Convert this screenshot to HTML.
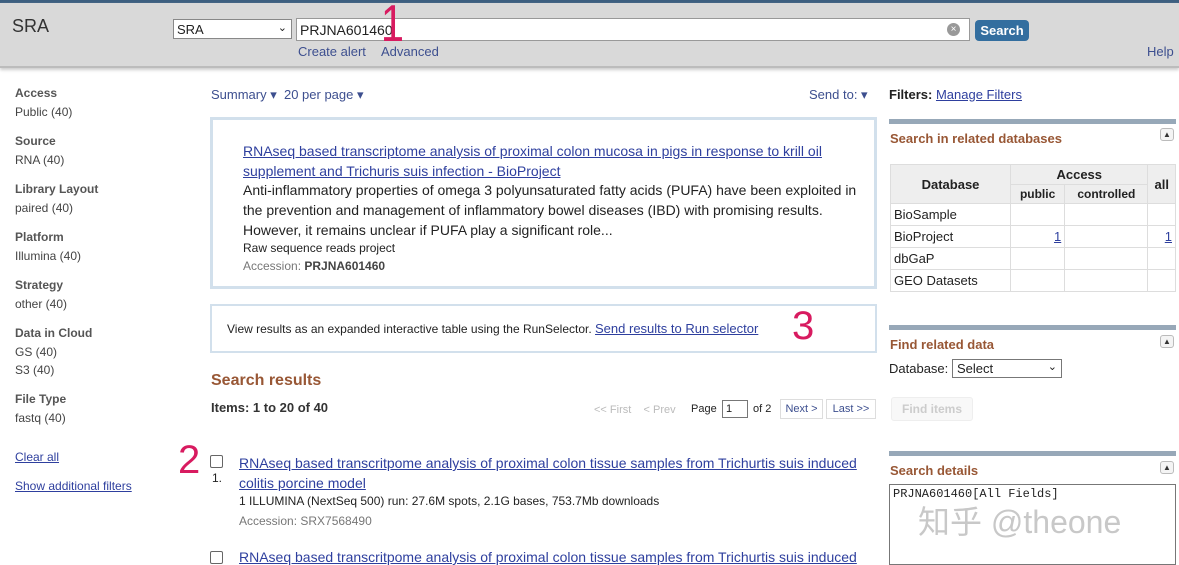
<!DOCTYPE html>
<html><head><meta charset="utf-8"><style>
*{box-sizing:border-box}
body{margin:0;width:1179px;height:565px;overflow:hidden;background:#fff;font-family:"Liberation Sans",Arial,sans-serif;font-size:13px;color:#222;position:relative}
.a{position:absolute;white-space:nowrap}
a,.lk{color:#2e3f9e;text-decoration:underline}
.b{color:#3d4f8f}
.fh{font-size:12px;color:#555;font-weight:bold}
.fv{font-size:12px;color:#444}
.h{color:#985735;font-weight:bold}
.bar{position:absolute;height:5px;background:#97a8b8}
.up{position:absolute;width:14px;height:13px;border:1px solid #bbb;border-radius:3px;background:#f4f4f4;font-size:8px;text-align:center;line-height:11px;color:#333}
td,th{border:1px solid #ddd;font-size:13px;padding:2px 3px}
th{background:#eee}
.pink{color:#d81b60;font-size:40px;font-family:"Liberation Sans",sans-serif}
</style></head><body>
<div class="a" style="left:0;top:0;width:1179px;height:3px;background:#3d5f80"></div>
<div class="a" style="left:0;top:3px;width:1179px;height:65px;background:#d9d9d9;border-bottom:2px solid #bcbcbc;box-shadow:0 2px 3px #ccc"></div>
<div class="a" style="left:12px;top:16px;font-size:18px;color:#333">SRA</div>
<div class="a" style="left:173px;top:19px;width:119px;height:20px;border:1px solid #888;background:#fff;font-size:13px;padding:2px 3px">SRA<span style="position:absolute;right:4px;top:1px;font-size:11px">⌄</span></div>
<div class="a" style="left:296px;top:18px;width:674px;height:23px;border:1px solid #999;background:#fff;font-size:14px;padding:3px 3px">PRJNA601460<span style="position:absolute;right:9px;top:4px;width:13px;height:13px;border-radius:50%;background:#999;color:#fff;font-size:10px;line-height:13px;text-align:center">×</span></div>
<div class="a" style="left:975px;top:20px;width:54px;height:21px;background:#336e9f;border-radius:4px;color:#fff;font-weight:bold;font-size:13px;text-align:center;line-height:21px">Search</div>
<div class="a b" style="left:298px;top:44px">Create alert</div>
<div class="a b" style="left:381px;top:44px">Advanced</div>
<div class="a b" style="left:1147px;top:44px">Help</div>
<div class="a pink" style="left:378px;top:-6px;font-size:52px;transform:scaleX(0.8)">1</div>

<div class="a fh" style="left:15px;top:86px">Access</div><div class="a fv" style="left:15px;top:105px">Public (40)</div>
<div class="a fh" style="left:15px;top:134px">Source</div><div class="a fv" style="left:15px;top:153px">RNA (40)</div>
<div class="a fh" style="left:15px;top:182px">Library Layout</div><div class="a fv" style="left:15px;top:201px">paired (40)</div>
<div class="a fh" style="left:15px;top:230px">Platform</div><div class="a fv" style="left:15px;top:249px">Illumina (40)</div>
<div class="a fh" style="left:15px;top:278px">Strategy</div><div class="a fv" style="left:15px;top:297px">other (40)</div>
<div class="a fh" style="left:15px;top:326px">Data in Cloud</div><div class="a fv" style="left:15px;top:345px">GS (40)</div><div class="a fv" style="left:15px;top:363px">S3 (40)</div>
<div class="a fh" style="left:15px;top:392px">File Type</div><div class="a fv" style="left:15px;top:411px">fastq (40)</div>
<div class="a lk" style="left:15px;top:450px;font-size:12px">Clear all</div>
<div class="a lk" style="left:15px;top:479px;font-size:12px">Show additional filters</div>

<div class="a b" style="left:211px;top:87px">Summary ▾ &nbsp;20 per page ▾</div>
<div class="a b" style="left:809px;top:87px">Send to: ▾</div>

<div class="a" style="left:210px;top:117px;width:667px;height:172px;border:3px solid #d2e0ec"></div>
<div class="a" style="left:243px;top:142px;line-height:19.7px;font-size:14px;white-space:normal;width:625px"><span class="lk">RNAseq based transcriptome analysis of proximal colon mucosa in pigs in response to krill oil supplement and Trichuris suis infection - BioProject</span><br>Anti-inflammatory properties of omega 3 polyunsaturated fatty acids (PUFA) have been exploited in the prevention and management of inflammatory bowel diseases (IBD) with promising results. However, it remains unclear if PUFA play a significant role...</div>
<div class="a" style="left:243px;top:241px;font-size:12px">Raw sequence reads project</div>
<div class="a" style="left:243px;top:259px;font-size:12px;color:#777">Accession: <b style="color:#444">PRJNA601460</b></div>

<div class="a" style="left:210px;top:304px;width:667px;height:49px;border:2px solid #d2e0ec"></div>
<div class="a" style="left:227px;top:321px;font-size:12px">View results as an expanded interactive table using the RunSelector. <span class="lk" style="font-size:13px">Send results to Run selector</span></div>
<div class="a pink" style="left:792px;top:304px">3</div>

<div class="a h" style="left:211px;top:372px;font-size:16px">Search results</div>
<div class="a" style="left:211px;top:400px;font-weight:bold;color:#333">Items: 1 to 20 of 40</div>
<div class="a" style="left:594px;top:404px;font-size:11px;color:#bbb">&lt;&lt; First &nbsp;&nbsp; &lt; Prev</div>
<div class="a" style="left:691px;top:403px;font-size:11px;color:#222">Page</div>
<div class="a" style="left:722px;top:400px;width:26px;height:18px;border:1px solid #777;font-size:11px;padding:2px 3px">1</div>
<div class="a" style="left:753px;top:403px;font-size:11px">of 2</div>
<div class="a" style="left:780px;top:399px;width:43px;height:20px;border:1px solid #ddd;font-size:11px;color:#3d4f8f;text-align:center;line-height:18px">Next &gt;</div>
<div class="a" style="left:826px;top:399px;width:50px;height:20px;border:1px solid #ddd;font-size:11px;color:#3d4f8f;text-align:center;line-height:18px">Last &gt;&gt;</div>

<div class="a pink" style="left:178px;top:438px">2</div>
<div class="a" style="left:210px;top:455px;width:13px;height:13px;border:1px solid #666;border-radius:2px"></div>
<div class="a" style="left:212px;top:471px;font-size:12px">1.</div>
<div class="a lk" style="left:239px;top:453px;font-size:14px;line-height:20px;white-space:normal;width:640px">RNAseq based transcritpome analysis of proximal colon tissue samples from Trichurtis suis induced colitis porcine model</div>
<div class="a" style="left:239px;top:494px;font-size:12px">1 ILLUMINA (NextSeq 500) run: 27.6M spots, 2.1G bases, 753.7Mb downloads</div>
<div class="a" style="left:239px;top:514px;font-size:12px;color:#777">Accession: SRX7568490</div>
<div class="a" style="left:210px;top:551px;width:13px;height:13px;border:1px solid #666;border-radius:2px"></div>
<div class="a lk" style="left:239px;top:549px;font-size:14px">RNAseq based transcritpome analysis of proximal colon tissue samples from Trichurtis suis induced</div>

<div class="a" style="left:889px;top:87px;font-weight:bold">Filters: <span class="lk" style="font-weight:normal">Manage Filters</span></div>
<div class="bar" style="left:889px;top:119px;width:287px"></div>
<div class="a h" style="left:890px;top:131px">Search in related databases</div>
<div class="up" style="left:1160px;top:128px">▲</div>
<table class="a" style="left:890px;top:164px;width:286px;border-collapse:collapse">
<tr><th rowspan="2" style="width:120px">Database</th><th colspan="2">Access</th><th rowspan="2">all</th></tr>
<tr><th style="font-size:12px">public</th><th style="font-size:12px">controlled</th></tr>
<tr><td style="height:22px">BioSample</td><td></td><td></td><td></td></tr>
<tr><td style="height:22px">BioProject</td><td style="text-align:right"><span class="lk">1</span></td><td></td><td style="text-align:right"><span class="lk">1</span></td></tr>
<tr><td style="height:22px">dbGaP</td><td></td><td></td><td></td></tr>
<tr><td style="height:22px">GEO Datasets</td><td></td><td></td><td></td></tr>
</table>
<div class="bar" style="left:889px;top:325px;width:287px"></div>
<div class="a h" style="left:890px;top:337px">Find related data</div>
<div class="up" style="left:1160px;top:335px">▲</div>
<div class="a" style="left:889px;top:361px">Database:</div>
<div class="a" style="left:952px;top:359px;width:110px;height:19px;border:1px solid #777;padding:1px 4px">Select<span style="position:absolute;right:4px;top:0;font-size:11px">⌄</span></div>
<div class="a" style="left:891px;top:397px;width:82px;height:24px;border:1px solid #eee;border-radius:3px;background:#f8f8f8;color:#ccc;font-weight:bold;font-size:12px;text-align:center;line-height:22px">Find items</div>
<div class="bar" style="left:889px;top:451px;width:287px"></div>
<div class="a h" style="left:890px;top:463px">Search details</div>
<div class="up" style="left:1160px;top:461px">▲</div>
<div class="a" style="left:889px;top:484px;width:287px;height:81px;border:1px solid #777;font-family:'Liberation Mono',monospace;font-size:12px;padding:2px 3px">PRJNA601460[All Fields]</div>
<div class="a" style="left:918px;top:497px;font-size:32px;color:#c8c8c8;font-family:'Liberation Sans','Noto Sans CJK SC',sans-serif">知乎 @theone</div>
</body></html>
